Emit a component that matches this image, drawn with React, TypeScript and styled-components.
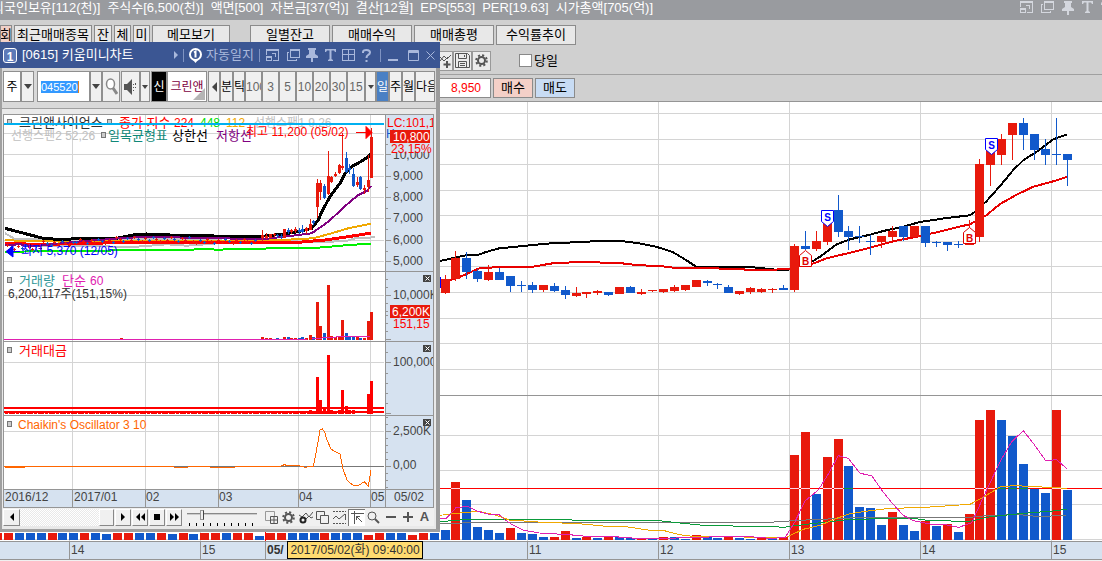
import React from 'react';
import styled, { createGlobalStyle } from 'styled-components';

const RED = '#e8190c';
const BLUE = '#1159cb';
const GRID = '#d4d4d4';
const LINE = '#959595';
const AXIS = '#d6e2f0';
const FONT = '"Liberation Sans", "Noto Sans CJK KR", sans-serif';

const Global = createGlobalStyle`
  *, *::before, *::after { box-sizing: border-box; }
  body { margin: 0; background: #f0f0f0; font: 13px/16px ${FONT}; color: #000; overflow: hidden; }
  button, input, select { font: inherit; color: inherit; margin: 0; }
  svg { display: block; flex: none; }
`;

/* ---------- main screen ---------- */

const Desktop = styled.div`
  position: relative;
  display: flex;
  flex-direction: column;
  min-height: 100vh;
  overflow: hidden;
`;

const InfoBar = styled.header`
  display: flex;
  align-items: center;
  justify-content: space-between;
  height: 20px;
  padding-bottom: 4px;
  background: #999b9f;
  color: #fff;
  white-space: pre;
  overflow: hidden;
`;

const Facts = styled.div`
  display: flex;
  gap: 7px;
  margin-left: -8px;
`;

const InfoIcons = styled.div`
  display: flex;
  gap: 8px;
  flex: none;
  width: 82px;
  overflow: hidden;
  color: #d4d7de;
`;

const ButtonRow = styled.nav`
  display: flex;
  gap: 2px;
  height: 25px;
  padding-top: 5px;
  background: #d0d0d0;
`;

const FlatButton = styled.button<{ $w: number; $bg?: string; $gap?: number }>`
  flex: none;
  display: flex;
  align-items: center;
  justify-content: center;
  width: ${p => p.$w}px;
  height: 20px;
  margin-left: ${p => p.$gap ?? 0}px;
  padding: 0;
  border: 1px solid #8b8b8b;
  background: ${p => p.$bg ?? '#e8e8e8'};
  white-space: nowrap;
  overflow: hidden;
`;

const ToolRow = styled.div`
  display: flex;
  align-items: center;
  height: 30px;
  padding: 2px 0 0 434px;
  background: #d0d0d0;
  border-bottom: 1px solid #a0a0a0;
`;

const SquareTool = styled.button`
  display: grid;
  place-items: center;
  width: 19px;
  height: 20px;
  padding: 0;
  border: 1px solid #999;
  background: #ececec;
  color: #555;
`;

const DayCheck = styled.label`
  display: flex;
  align-items: center;
  gap: 2px;
  margin-left: 28px;
  input {
    appearance: none;
    width: 13px;
    height: 13px;
    border: 1px solid #888;
    background: #fff;
  }
`;

const OrderRow = styled.div`
  display: flex;
  align-items: center;
  gap: 2px;
  height: 27px;
  padding: 0 0 0 400px;
  background: #d0d0d0;
  border-bottom: 1px solid ${LINE};
`;

const PriceInput = styled.input`
  width: 91px;
  height: 20px;
  padding: 0 9px;
  border: 1px solid #8b8b8b;
  background: #fff;
  color: #f00;
  font-size: 12px;
  text-align: right;
`;

const ChartArea = styled.section`
  display: flex;
  flex-direction: column;
  background: #fff;
  svg { width: 100%; }
`;

const TimeStrip = styled.div`
  position: relative;
  height: 19px;
  background: ${AXIS};
  border-top: 1px solid ${LINE};
  border-bottom: 1px solid ${LINE};
`;

const TimeTip = styled.output`
  position: absolute;
  left: 287px;
  top: -1px;
  width: 136px;
  height: 18px;
  border: 1px solid #000;
  background: #ffdb70;
  color: #333;
  font-size: 12px;
  text-align: center;
  white-space: nowrap;
`;

/* ---------- floating chart window ---------- */

const Window = styled.section`
  position: absolute;
  left: 0;
  top: 42px;
  width: 440px;
  display: flex;
  flex-direction: column;
  background: #e9e9e9;
  border-bottom: 3px solid #a0a0a0;
`;

const TitleBar = styled.header`
  display: flex;
  align-items: center;
  height: 26px;
  padding-left: 3px;
  background: #3b5693;
  color: #fff;
  white-space: nowrap;
`;

const Badge = styled.span`
  display: grid;
  place-items: center;
  width: 14px;
  height: 15px;
  margin-right: 5px;
  border: 1px solid #fff;
  border-radius: 3px;
  background: #5d7ab8;
  font-size: 12px;
  font-weight: 700;
`;

const Title = styled.h1`
  margin: 0;
  flex: 1;
  font-size: 13px;
  font-weight: 400;
`;

const TitleTools = styled.div`
  display: flex;
  align-items: center;
  flex: none;
  width: 266px;
  color: #a9b8dc;
`;

const Divider = styled.i`
  flex: none;
  width: 1px;
  height: 13px;
  margin-left: 5px;
  background: #7f93c2;
`;

const IconButton = styled.button<{ $w: number }>`
  display: grid;
  place-items: center;
  flex: none;
  width: ${p => p.$w}px;
  height: 20px;
  padding: 0;
  border: 0;
  background: none;
  color: inherit;
`;

const WindowBody = styled.div`
  display: flex;
  flex-direction: column;
  border-left: 2px solid #a0a0a0;
  border-right: 4px solid #9c9c9c;
  padding: 0 2px 3px 1px;
`;

const Periods = styled.div`
  display: flex;
  align-items: center;
  height: 41px;
  margin: 0 -2px 0 -1px;
  padding: 0 0 3px 0;
  background: #d9d9d9;
  border-bottom: 1px solid #a0a0a0;
  overflow: hidden;
`;

const Cell = styled.button<{ $w: number; $gap?: number; $bg?: string; $ink?: string }>`
  position: relative;
  flex: none;
  display: grid;
  place-items: center;
  width: ${p => p.$w}px;
  height: 31px;
  margin-left: ${p => p.$gap ?? 0}px;
  padding: 0;
  border: 1px solid #8f8f8f;
  background: ${p => p.$bg ?? '#f0f0f0'};
  color: ${p => p.$ink ?? '#000'};
  font-size: 12px;
  white-space: nowrap;
  overflow: hidden;
`;

const CellSelect = styled.select<{ $w: number; $gap?: number; $ink?: string; $bg?: string }>`
  appearance: none;
  flex: none;
  width: ${p => p.$w}px;
  height: 31px;
  margin-left: ${p => p.$gap ?? 0}px;
  padding: 0;
  border: 1px solid #8f8f8f;
  border-radius: 0;
  background: ${p => p.$bg ?? '#fff'};
  color: ${p => p.$ink ?? '#000'} !important;
  font-size: 12px;
  text-align: center;
`;

const CodeField = styled.div`
  display: flex;
  align-items: center;
  width: 53px;
  height: 31px;
  margin-left: 3px;
  padding-left: 3px;
  border: 1px solid #8f8f8f;
  background: #fff;
  input {
    width: 38px;
    height: 12px;
    padding: 0;
    border: 0;
    border-right: 1px solid #e08020;
    background: #3399ff;
    color: #fff;
    font-size: 11px;
    line-height: 12px;
  }
`;

const Corner = styled.i`
  position: absolute;
  right: 1px;
  bottom: 1px;
  border-left: 12px solid transparent;
  border-bottom: 12px solid #b5b5b5;
`;

const Panels = styled.div`
  margin: 5px 0 0 0;
  border: 1px solid ${LINE};
  background: #fff;
`;

const Panel = styled.div`
  position: relative;
  display: flex;
  border-bottom: 1px solid ${LINE};
  svg:first-child { flex: 1; min-width: 0; }
  svg:nth-child(2) { flex: none; background: ${AXIS}; border-left: 1px solid ${LINE}; }
`;

const PanelClose = styled.button`
  position: absolute;
  right: 2px;
  top: 3px;
  display: grid;
  place-items: center;
  width: 8px;
  height: 7px;
  padding: 0;
  border: 0;
  background: #444;
`;

const Dates = styled.div`
  height: 17px;
  background: ${AXIS};
  svg { width: 100%; }
`;

const Controls = styled.div`
  display: flex;
  align-items: center;
  height: 18px;
  background: #f0f0f0;
  color: #555;
`;

const ScrollButton = styled.button<{ $w?: number; $gap?: number }>`
  flex: none;
  display: grid;
  place-items: center;
  width: ${p => p.$w ?? 16}px;
  height: 17px;
  margin-left: ${p => p.$gap ?? 0}px;
  padding: 0;
  border: 1px solid;
  border-color: #fff #888 #888 #fff;
  background: #f0f0f0;
`;

const ScrollTrack = styled.div`
  flex: none;
  width: 79px;
  height: 17px;
  background: repeating-conic-gradient(#fff 0 25%, #e9e9e9 0 50%) 0 0 / 2px 2px;
`;

const Zoom = styled.input`
  appearance: none;
  flex: none;
  width: 70px;
  height: 17px;
  margin: 0 6px 0 5px !important;
  background:
    linear-gradient(#888, #888) 0 4px / 100% 1px no-repeat,
    linear-gradient(#ccc, #ccc) 0 5px / 100% 1px no-repeat,
    repeating-linear-gradient(90deg, transparent 0 2px, #000 2px 3px, transparent 3px 7px) 0 14px / 100% 3px no-repeat;
  &::-webkit-slider-thumb {
    appearance: none;
    width: 4px;
    height: 10px;
    margin-top: -5px;
    border: 1px solid #999;
    border-right-color: #444;
    background: #f0f0f0;
  }
`;

const Tool = styled.button<{ $on?: boolean }>`
  display: grid;
  place-items: center;
  flex: none;
  width: 17px;
  height: 17px;
  padding: 0;
  border: 0;
  border-left: ${p => (p.$on ? '1px solid #777' : '0')};
  border-top: ${p => (p.$on ? '1px solid #777' : '0')};
  background: ${p => (p.$on ? '#fff' : 'none')};
  color: #555;
`;

/* ---------- icons ---------- */

const ResizeIcon = () => (
  <svg width="13" height="12" fill="currentColor" shapeRendering="crispEdges">
    <path d="M0 0h13v12H7v-1h5V2H1v4H0z" />
    <path d="M0 7h6v5H0zM1 9v2h4V9z" fillRule="evenodd" />
    <path d="M6 4h4v4H9V5H6z" />
  </svg>
);
const CopyIcon = () => (
  <svg width="13" height="12" fill="currentColor" shapeRendering="crispEdges">
    <path d="M3 0h10v9H3zM4 2v6h8V2z" fillRule="evenodd" />
    <path d="M0 3h2v1H1v7h8v-1h1v2H0z" />
  </svg>
);
const PinIcon = () => (
  <svg width="12" height="14" fill="currentColor">
    <path d="M2 0h8v2H9v4l3 2v2H7v4H5v-4H0V8l3-2V2H2z" />
  </svg>
);
const TeeIcon = () => (
  <svg width="11" height="12" fill="currentColor">
    <path d="M0 0h11v3h-1L9 1.500H6.500V10l1.500 1v1H3v-1l1.500-1V1.500H2L1 3H0z" />
  </svg>
);
const GridIcon = () => (
  <svg width="13" height="12" fill="currentColor" shapeRendering="crispEdges">
    <path d="M0 0h13v12H0zM1 1v4h5V1zM7 1v4h5V1zM1 6v5h5V6zM7 6v5h5V6z" fillRule="evenodd" />
  </svg>
);
const HelpIcon = () => (
  <svg width="9" height="13" fill="none" stroke="currentColor" strokeWidth="2">
    <path d="M1 4V3q0-2 3.500-2T8 3.500Q8 5 6 6 4.500 7 4.500 9M4.500 11v2" />
  </svg>
);
const MinIcon = () => <svg width="11" height="12"><path d="M0 10h10v2H0z" fill="currentColor" /></svg>;
const MaxIcon = () => (
  <svg width="11" height="11" fill="none" stroke="currentColor"><path d="M.5.5h10v10H.5zM0 1.500h11M0 2.500h11" /></svg>
);
const CloseIcon = () => (
  <svg width="9" height="9" stroke="currentColor"><path d="M.5.5l8 8M8.500.5l-8 8" /></svg>
);
const ClockIcon = () => (
  <svg width="15" height="15">
    <path d="M7.500 15L5 12h5z" fill="#fff" />
    <circle cx="7.500" cy="6.500" r="5.500" fill="#3b5693" stroke="#fff" strokeWidth="2" />
    <path d="M6 4.500l1.500-1V9.500" fill="none" stroke="#fff" strokeWidth="2" />
  </svg>
);
const Triangle = ({ dir, size = 4, color = '#444' }: { dir: 'left' | 'right' | 'down'; size?: number; color?: string }) => {
  const s = size;
  const shape = {
    left: `M${s} 0v${2 * s}L0 ${s}z`,
    right: `M0 0v${2 * s}L${s} ${s}z`,
    down: `M0 0h${2 * s}L${s} ${s + 1}z`,
  }[dir];
  return (
    <svg width={dir === 'down' ? 2 * s : s} height={dir === 'down' ? s + 1 : 2 * s}>
      <path d={shape} fill={color} />
    </svg>
  );
};
const LensIcon = () => (
  <svg width="13" height="18" fill="none" stroke="#888">
    <ellipse cx="5.500" cy="6" rx="4" ry="5" fill="#fff" strokeWidth="1.500" />
    <path d="M8 10l4 6" strokeWidth="3" />
  </svg>
);
const SpeakerIcon = () => (
  <svg width="14" height="16" fill="#555">
    <path d="M0 5h3l5-5v16l-5-5H0z" />
    <path d="M9 5h1v1H9zM9 8h1v1H9zM9 11h1v1H9zM11 4h1v2h-1zM11 8h1v1h-1z" />
  </svg>
);
const GearIcon = ({ size = 13 }: { size?: number }) => (
  <svg width={size} height={size} viewBox="0 0 13 13" fill="none" stroke="currentColor">
    <circle cx="6.500" cy="6.500" r="3.500" strokeWidth="2" />
    <circle cx="6.500" cy="6.500" r="5.300" strokeWidth="2" strokeDasharray="2.080 2.080" />
  </svg>
);
const SaveIcon = () => (
  <svg width="15" height="15" fill="none" stroke="currentColor">
    <path d="M.5.5h12l2 2v12H.5zM3.500.5v5h8v-5M3.500 14V8.500h8V14M5 10.500h5M5 12.500h5M9.500 2v2" />
  </svg>
);
const AddChartIcon = () => (
  <svg width="15" height="15" fill="none" stroke="currentColor">
    <path d="M0 4l4 4 4-5 3 3 4-4M0 9l4-5 4 4 4-4" />
    <path d="M11 8v7M7.500 11.500h7" strokeWidth="2" />
  </svg>
);

/* ---------- chart data ---------- */

type Candle = [string, number, number, number, number];

// direction, body top, body bottom, high, low
const candles: Candle[] = [
  ['r', 279, 293, 275, 294], ['r', 258, 279, 251, 281], ['b', 258, 272, 252, 279], ['b', 271, 279, 269, 282],
  ['r', 272, 280, 265, 281], ['b', 272, 280, 268, 280], ['b', 276, 286, 276, 292], ['b', 285, 286, 281, 292],
  ['b', 285, 290, 282, 293], ['r', 285, 290, 285, 292], ['b', 286, 291, 283, 292], ['b', 290, 295, 286, 299],
  ['r', 293, 296, 287, 297], ['r', 292, 294, 292, 298], ['r', 291, 293, 290, 295], ['b', 292, 295, 292, 296],
  ['r', 287, 294, 287, 294], ['b', 287, 293, 286, 293], ['r', 292, 294, 289, 295], ['r', 290, 291, 290, 292],
  ['r', 289, 292, 289, 293], ['r', 287, 291, 285, 292], ['r', 285, 290, 285, 291], ['r', 280, 287, 280, 287],
  ['b', 281, 283, 280, 286], ['b', 284, 285, 283, 289], ['b', 287, 293, 285, 293], ['r', 291, 294, 291, 295],
  ['r', 288, 292, 287, 294], ['r', 289, 292, 288, 293], ['r', 289, 290, 288, 293], ['b', 288, 290, 285, 290],
  ['r', 246, 290, 244, 292], ['b', 246, 249, 231, 250], ['r', 241, 249, 231, 251], ['r', 223, 242, 223, 245],
  ['b', 210, 232, 195, 237], ['b', 231, 237, 226, 250], ['b', 236, 237, 226, 243], ['b', 241, 242, 235, 255],
  ['r', 236, 242, 236, 248], ['r', 231, 237, 226, 241], ['b', 226, 237, 226, 241], ['r', 226, 237, 226, 237],
  ['b', 226, 243, 226, 247], ['b', 242, 243, 241, 247], ['b', 242, 245, 242, 251], ['b', 244, 245, 241, 248],
  ['r', 235, 245, 220, 245], ['r', 164, 237, 159, 242], ['r', 150, 165, 150, 186], ['r', 139, 155, 134, 165],
  ['r', 123, 135, 123, 160], ['b', 123, 135, 118, 150], ['b', 134, 150, 134, 160], ['b', 149, 155, 139, 165],
  ['b', 154, 155, 118, 165], ['b', 154, 160, 154, 186],
];

const volumes: [string, number][] = [
  ['b', 530], ['r', 482], ['b', 500], ['b', 527], ['b', 530], ['b', 533], ['r', 528], ['b', 533], ['b', 534], ['b', 537],
  ['r', 537], ['r', 531], ['b', 538], ['r', 537], ['b', 538], ['r', 537], ['b', 537], ['b', 538], ['r', 538], ['b', 539],
  ['r', 537], ['b', 537], ['b', 539], ['r', 535], ['b', 537], ['b', 538], ['r', 537], ['b', 538], ['b', 539], ['r', 538],
  ['b', 538], ['r', 537], ['r', 455], ['r', 432], ['b', 494], ['r', 457], ['r', 439], ['b', 466], ['b', 507], ['b', 508],
  ['b', 525], ['r', 512], ['b', 525], ['b', 531], ['r', 521], ['b', 526], ['r', 524], ['b', 532], ['r', 514], ['r', 420],
  ['r', 410], ['b', 420], ['b', 436], ['b', 464], ['b', 489], ['b', 493], ['r', 410], ['b', 490],
];

const earlier = 'rrbbbrbbrbbrrbbrbrbrrbrrbrrbbbrbbbrrbbrrb';
const shortEarlier: Record<number, number> = { 10: 534, 16: 534, 18: 534, 24: 536, 34: 535, 38: 535 };

const barX = (i: number) => Math.floor(441 + (i * 131) / 12);
const ink = (k: string) => (k === 'r' ? RED : BLUE);

// Series are stored at three units per pixel, relative to an origin.
const trace = (s: string, ox: number, oy: number) =>
  s.trim().split(/\s+/).map(p => {
    const [x, y] = p.split(',').map(Number);
    return `${(ox + x / 3).toFixed(1)},${(oy + y / 3).toFixed(1)}`;
  }).join(' ');

const Curve = ({ pts, color, w = 1 }: { pts: string; color: string; w?: number }) => (
  <polyline points={pts} fill="none" stroke={color} strokeWidth={w} shapeRendering="crispEdges" />
);

const priceSlow = trace('12,243 40,237 60,232 95,225 125,225 150,216 190,205 240,200 290,195 355,189 420,187 490,183 555,183 610,190 660,200 710,216 750,240 780,260 860,261 940,261 980,265 1020,269', 436, 180)
  + ' ' + trace('55,509 90,499 128,484 150,470 200,433 240,418 300,404 340,393 400,380 450,366 530,354 600,346 618,333 650,303 690,258 730,210 760,181 800,155 850,118 892,103', 770, 100);
const priceFast = trace('15,309 45,300 80,287 130,265 190,261 290,260 350,250 430,246 550,249 600,255 680,259 720,264 810,264 940,269 1010,269', 436, 180)
  + ' ' + trace('60,507 90,499 128,491 170,475 240,458 300,443 370,424 440,410 500,397 560,382 600,373 650,345 690,312 740,284 790,260 850,244 892,230', 770, 100);

const volMagenta = trace('12,386 30,386 60,353 95,349 125,364 165,374 190,374 205,388 230,405 260,420 310,429 400,434 440,438 535,440 600,445 700,445 770,442 930,439', 436, 390)
  + ' ' + trace('0,445 45,443 75,395 105,333 145,300 175,252 205,197 235,205 270,250 305,257 335,300 365,338 400,376 430,392 480,402 530,405 567,412 605,398 650,300 690,215 725,155 760,122 790,160 827,212 860,209 890,236', 770, 390);
const volOrange = trace('12,376 80,368 130,364 180,376 220,390 305,396 430,401 500,408 570,410 635,420 685,422 730,434 770,439 890,440', 436, 390)
  + ' ' + trace('0,443 50,441 100,418 150,406 200,385 240,371 300,362 350,356 480,351 600,343 640,322 690,291 730,287 780,289 830,292 890,295', 770, 390);
const volGreen = trace('12,395 45,392 100,388 400,388 410,391 660,391 740,400 800,406 930,409', 436, 390)
  + ' ' + trace('0,409 40,412 100,404 180,395 240,388 430,385 480,392 600,394 660,380 740,372 800,367 860,362 890,357', 770, 390);
const volGray = trace('12,401 75,401 80,397 1000,397', 436, 390)
  + ' ' + trace('0,397 90,391 240,384 600,382 660,376 750,374 810,380 890,375', 770, 390);

const hours = [69, 200, 527, 658, 789, 920, 1051];

const Marker = ({ x, y, kind }: { x: number; y: number; kind: 'S' | 'B' }) => {
  const c = kind === 'S' ? '#00f' : '#e00000';
  const d = kind === 'S' ? 'M-6 0h12v11l-6 5l-6-5z' : 'M-6 16h12V5L0 0l-6 5z';
  return (
    <g transform={`translate(${x + 0.5} ${y + 0.5})`}>
      <path d={d} fill="#fff" stroke={c} />
      <text x="0" y={kind === 'S' ? 10 : 14} fontSize="10" fontWeight="700" textAnchor="middle" fill={c}>{kind}</text>
    </g>
  );
};

const PriceChart = () => (
  <svg height="293">
    <g transform="translate(0 -102)">
      <g stroke={GRID} shapeRendering="crispEdges">
        {[113, 139, 164, 190, 215, 241, 266, 292, 318, 343, 369].map(y => <line key={y} x1="0" x2="100%" y1={y + 0.5} y2={y + 0.5} />)}
        {hours.map(x => <line key={x} x1={x + 0.5} x2={x + 0.5} y1="102" y2="396" />)}
      </g>
      <Curve pts={priceSlow} color="#000" w={2} />
      <Curve pts={priceFast} color="#e80000" w={2} />
      <g shapeRendering="crispEdges">
        {candles.map(([k, top, bottom, high, low], i) => (
          <g key={i} fill={ink(k)}>
            <rect x={barX(i) + 4} y={high} width="1" height={low - high} />
            <rect x={barX(i)} y={top} width="9" height={bottom - top} />
          </g>
        ))}
        <rect x="440" y="277" width="1" height="11" fill="#00f" />
      </g>
      <Marker kind="B" x={805} y={250} />
      <Marker kind="S" x={827} y={210} />
      <Marker kind="B" x={969} y={227} />
      <Marker kind="S" x={991} y={138} />
    </g>
  </svg>
);

const VolumeChart = () => (
  <svg height="146">
    <g transform="translate(0 -395)">
      <g stroke={GRID} shapeRendering="crispEdges">
        {[435, 470, 504, 539].map(y => <line key={y} x1="0" x2="100%" y1={y + 0.5} y2={y + 0.5} />)}
        {hours.map(x => <line key={x} x1={x + 0.5} x2={x + 0.5} y1="395" y2="541" />)}
        <line x1="0" x2="100%" y1="395.5" y2="395.5" stroke={LINE} />
        <line x1="0" x2="100%" y1="488.5" y2="488.5" stroke="#f00" />
        <line x1="265.5" x2="265.5" y1="530" y2="541" stroke="#f00" />
      </g>
      <g shapeRendering="crispEdges">
        {earlier.split('').map((k, i) => {
          const top = shortEarlier[i] ?? 533;
          return <rect key={i} x={barX(i - 41)} y={top} width="9" height={540 - top} fill={ink(k)} />;
        })}
        {volumes.map(([k, top], i) => (
          <g key={i}>
            <rect x={barX(i)} y={top} width="9" height={540 - top} fill={ink(k)} />
            {top < 488 && <rect x={barX(i)} y="488" width="9" height="1" fill={k === 'r' ? '#ffd8e8' : '#0a9a3a'} />}
          </g>
        ))}
      </g>
      <Curve pts={volGray} color="#777" />
      <Curve pts={volGreen} color="#0a9a3a" />
      <Curve pts={volOrange} color="#f0a800" />
      <Curve pts={volMagenta} color="#e020b0" />
    </g>
  </svg>
);

/* ---------- mini chart ---------- */

const monthLines = [72, 145, 218, 298, 370];

const Grid = ({ ys, top, bottom }: { ys: number[]; top: number; bottom: number }) => (
  <g stroke={GRID} shapeRendering="crispEdges">
    {ys.map(y => <line key={y} x1="4" x2="384" y1={y + 0.5} y2={y + 0.5} />)}
    {monthLines.map(x => <line key={x} x1={x + 0.5} x2={x + 0.5} y1={top} y2={bottom} />)}
  </g>
);

const Ticks = ({ major, minor }: { major: number[]; minor: number[] }) => (
  <g fill={LINE}>
    {major.map(y => <rect key={y} x="386" y={y} width="5" height="1" />)}
    {minor.map(y => <rect key={y} x="386" y={y} width="2" height="1" />)}
  </g>
);

const Bullet = ({ x, y }: { x: number; y: number }) => (
  <rect x={x + 0.5} y={y + 0.5} width="4" height="5" fill="#ccc" stroke="#777" shapeRendering="crispEdges" />
);

const T = ({ x, y, c, s = 12, children }: { x: number; y: number; c: string; s?: number; children: React.ReactNode }) => (
  <text x={x} y={y} fill={c} fontSize={s}>{children}</text>
);

// left, direction, body top, body bottom, high, low at three units per pixel
const miniCandles: [number, string, number, number, number, number][] = [
  [138, 'r', 391, 400, 374, 410], [150, 'r', 393, 398, 385, 402], [162, 'r', 388, 398, 388, 400], [174, 'r', 387, 391, 383, 395],
  [183, 'b', 390, 394, 386, 400], [195, 'b', 392, 397, 388, 402], [204, 'r', 373, 398, 371, 400], [216, 'b', 375, 382, 370, 388],
  [225, 'r', 376, 380, 371, 386], [237, 'r', 372, 379, 366, 384], [250, 'b', 376, 381, 370, 386], [258, 'b', 372, 380, 360, 384],
  [270, 'r', 370, 377, 366, 388], [282, 'r', 356, 374, 342, 376], [291, 'b', 349, 354, 345, 360],
  [304, 'r', 235, 305, 222, 340], [313, 'r', 235, 262, 225, 285], [325, 'b', 243, 279, 237, 282], [337, 'r', 213, 268, 138, 270],
  [346, 'r', 216, 232, 214, 235], [358, 'r', 207, 214, 200, 216], [370, 'r', 180, 205, 177, 207], [379, 'r', 183, 188, 85, 195],
  [391, 'b', 160, 200, 142, 205], [399, 'b', 190, 195, 178, 208], [412, 'b', 207, 242, 190, 245], [424, 'r', 231, 240, 215, 245],
  [433, 'b', 216, 252, 212, 256], [445, 'r', 250, 254, 240, 268], [457, 'r', 225, 247, 150, 260], [466, 'r', 96, 218, 70, 218],
];

const flat = Array.from({ length: 69 }, (_, i) => {
  const x = 6 + i * 3.64;
  const drift = x < 40 ? 247 : x < 75 ? 243 : x < 115 ? 241 : x < 190 ? 239 : 241;
  return { x: Math.round(x), y: drift + ((i * 7) % 5) - 2, k: (i * 5) % 7 < 4 ? 'r' : 'b' };
});

const miniVolumes: [number, string, number][] = [
  [138, 'r', 201], [150, 'r', 204], [162, 'r', 204], [183, 'b', 204], [204, 'r', 201], [216, 'b', 201], [225, 'r', 204], [237, 'r', 204],
  [250, 'b', 204], [258, 'b', 201], [270, 'r', 204], [282, 'r', 195], [291, 'b', 201], [303, 'r', 96], [312, 'r', 168], [324, 'b', 189],
  [336, 'r', 45], [345, 'r', 198], [357, 'r', 201], [369, 'r', 198], [378, 'r', 150], [390, 'b', 189], [399, 'b', 198], [411, 'b', 198],
  [423, 'r', 198], [432, 'b', 204], [444, 'r', 204], [456, 'r', 153], [465, 'r', 126],
];
const miniAmounts: [number, number][] = [
  [282, 420], [303, 321], [312, 390], [324, 415], [336, 255], [345, 420], [357, 424], [369, 420], [378, 360], [390, 408],
  [399, 420], [411, 420], [456, 372], [465, 333],
];

const px = (v: number) => Math.round(v / 3);
const L = (s: string) => trace(s, 0, 105);
const R = (s: string) => trace(s, 215, 105);

const miniMAs = [
  { c: '#c0c0c0', w: 2, p: L('15,385 45,402 350,402 660,403') + ' ' + R('20,407 250,407') },
  { c: '#c0c0c0', w: 2, p: L('70,422 100,424 300,424 400,426 500,418 560,422 640,416') + ' ' + R('0,415 300,412 395,408 420,400 480,397') },
  { c: '#00f000', w: 2, p: L('15,440 230,438 440,435 640,433') + ' ' + R('0,434 180,430 300,429 400,420 468,416') },
  { c: '#f0a800', w: 2, p: L('15,406 200,410 350,408 640,408') + ' ' + R('0,408 200,405 295,400 350,385 400,370 468,356') },
  { c: '#f00', w: 3, p: L('15,416 140,418 400,412 640,414') + ' ' + R('0,412 250,412 330,405 400,395 468,384') },
  { c: '#000', w: 3, p: L('15,370 60,382 130,400 170,403 355,399 400,390 440,387 510,390 640,393') + ' ' + R('0,395 150,393 200,388 250,380 290,370 310,345 320,320 345,275 375,235 390,205 410,185 440,168 460,155 468,145') },
  { c: '#800080', w: 2, p: L('15,420 60,418 100,424 230,410 360,400 440,395 640,400') + ' ' + R('0,400 150,402 250,390 290,385 340,350 400,295 430,270 455,258 468,243') },
];

const oscillator = trace('0,156 60,156 75,155 195,154 208,149 220,152 250,152 270,157 295,154 303,115 315,45 322,42 328,48 336,75 348,102 360,110 375,116 385,165 397,197 415,211 430,212 448,200 460,214 468,165', 215, 415);

const CloseMark = () => (
  <PanelClose aria-label="close panel">
    <svg width="5" height="5" stroke="#fff"><path d="M.5.5l4 4M4.500.5l-4 4" /></svg>
  </PanelClose>
);

const MiniPrice = () => (
  <Panel>
    <svg height="156">
      <g transform="translate(-4 -115)">
        <Grid ys={[133, 154, 176, 197, 218, 240, 261]} top={115} bottom={271} />
        <Bullet x={7} y={119} />
        <T x={19} y={127} c="#333" s={13}>크린앤사이언스</T>
        <Bullet x={107} y={119} />
        <T x={119} y={127} c="#f00" s={13}>종가 지수</T>
        <T x={174} y={127} c="#f00">224</T>
        <T x={200} y={127} c="#00e000">448</T>
        <T x={226} y={127} c="#f0a800">112</T>
        <T x={254} y={127} c="#c0c0c0">선행스팬1 9,26</T>
        <T x={11} y={140} c="#c0c0c0">선행스팬2 52,26</T>
        <Bullet x={101} y={132} />
        <T x={108} y={140} c="#108878" s={13}>일목균형표</T>
        <T x={172} y={140} c="#000" s={13}>상한선</T>
        <T x={216} y={140} c="#800080" s={13}>저항선</T>
        <rect x="4" y="123" width="380" height="2" fill="#00b0f0" />
        {miniMAs.map((m, i) => <Curve key={i} pts={m.p} color={m.c} w={m.w} />)}
        <g shapeRendering="crispEdges">
          {flat.map((f, i) => (
            <g key={i} fill={ink(f.k)}>
              <rect x={f.x} y={f.y} width="3" height="1" />
              <rect x={f.x + 1} y={f.y - 1} width="1" height="3" />
            </g>
          ))}
          {miniCandles.map(([x, k, top, bottom, high, low]) => (
            <g key={x} fill={ink(k)}>
              <rect x={215 + px(x) + 1} y={105 + px(high)} width="1" height={px(low) - px(high)} />
              <rect x={215 + px(x)} y={105 + px(top)} width="3" height={Math.max(1, px(bottom) - px(top))} />
            </g>
          ))}
        </g>
        <T x={246} y={136} c="#f00">최고 11,200 (05/02)</T>
        <path d="M356 132.500h10M366 126.500v12l6-6z" fill="#f00" stroke="#f00" strokeWidth="1" />
        <T x={21} y={255} c="#00f">최저 5,370 (12/05)</T>
        <path d="M20 251.500h-8M13 246v11l-7-5.500z" fill="#00f" stroke="#00f" />
      </g>
    </svg>
    <svg width="48" height="156">
      <g transform="translate(-386 -115)">
        <Ticks major={[154, 176, 197, 218, 240, 261]} minor={[144, 165, 187, 208, 229, 251]} />
        <T x={387} y={127} c="#f00">LC:101,1</T>
        <T x={386} y={138} c={BLUE}>H</T>
        <T x={393} y={159} c="#444">10,000</T>
        <T x={393} y={180} c="#444">9,000</T>
        <T x={393} y={201} c="#444">8,000</T>
        <T x={393} y={222} c="#444">7,000</T>
        <T x={393} y={244} c="#444">6,000</T>
        <T x={393} y={265} c="#444">5,000</T>
        <rect x="392" y="142" width="38" height="10" fill={AXIS} />
        <T x={391} y={153} c="#f00">23,15%</T>
        <rect x="390" y="130" width="40" height="13" fill={RED} />
        <T x={393} y={141} c="#fff">10,800</T>
      </g>
    </svg>
  </Panel>
);

const MiniVolume = () => (
  <Panel>
    <svg height="69">
      <g transform="translate(-4 -272)">
        <Grid ys={[295]} top={272} bottom={341} />
        <Bullet x={7} y={277} />
        <T x={19} y={285} c="#309898" s={13}>거래량</T>
        <T x={62} y={285} c="#e020b0" s={13}>단순</T>
        <T x={90} y={285} c="#e020b0">60</T>
        <T x={8} y={298} c="#333">6,200,117주(151,15%)</T>
        <g shapeRendering="crispEdges">
          {miniVolumes.map(([x, k, top]) => (
            <rect key={x} x={215 + px(x)} y={270 + px(top)} width="3" height={70 - px(top)} fill={ink(k)} />
          ))}
          <rect x="120" y="338" width="3" height="1" fill={RED} />
        </g>
        <Curve pts={'4,339.500 ' + trace('0,208 290,207 330,203 380,200 468,198', 215, 270)} color="#e020b0" />
      </g>
    </svg>
    <svg width="48" height="69">
      <g transform="translate(-386 -272)">
        <Ticks major={[295, 339]} minor={[279, 287, 303, 311, 315, 323, 331]} />
        <T x={393} y={299} c="#444">10,000K</T>
        <rect x="390" y="305" width="40" height="13" fill={RED} />
        <T x={392} y={316} c="#fff">6,200K</T>
        <T x={393} y={328} c="#f00">151,15</T>
      </g>
    </svg>
    <CloseMark />
  </Panel>
);

const MiniAmount = () => (
  <Panel>
    <svg height="73">
      <g transform="translate(-4 -342)">
        <Grid ys={[362]} top={342} bottom={415} />
        <Bullet x={7} y={347} />
        <T x={19} y={355} c="#f00" s={13}>거래대금</T>
        <g fill="#f00" shapeRendering="crispEdges">
          <rect x="4" y="407" width="380" height="2" />
          <rect x="4" y="411" width="380" height="2" />
          {Array.from({ length: 91 }, (_, i) => <rect key={i} x={Math.round(5 + i * 3.64)} y="413" width="3" height="1" />)}
          {miniAmounts.map(([x, top]) => (
            <rect key={x} x={215 + px(x)} y={270 + px(top)} width="3" height={144 - px(top)} />
          ))}
        </g>
      </g>
    </svg>
    <svg width="48" height="73">
      <g transform="translate(-386 -342)">
        <Ticks major={[362, 413]} minor={[352, 373, 383, 393, 403]} />
        <T x={393} y={366} c="#444">100,000</T>
      </g>
    </svg>
    <CloseMark />
  </Panel>
);

const MiniOscillator = () => (
  <Panel>
    <svg height="73">
      <g transform="translate(-4 -416)">
        <Grid ys={[431]} top={416} bottom={489} />
        <Bullet x={7} y={421} />
        <T x={18} y={429} c="#ff6600">Chaikin's Oscillator 3 10</T>
        <rect x="4" y="466" width="380" height="1" fill="#777" />
        <path d="M4 466.500h170M188 466.500h22" stroke="#ff6600" shapeRendering="crispEdges" />
        <path d="M5 467.500h20M174 467.500h14M210 467.500h10" stroke="#ff6600" shapeRendering="crispEdges" />
        <Curve pts={oscillator} color="#ff6600" />
      </g>
    </svg>
    <svg width="48" height="73">
      <g transform="translate(-386 -416)">
        <Ticks major={[431, 466]} minor={[417, 424, 438, 445, 452, 459, 473, 480, 487]} />
        <T x={393} y={435} c="#444">2,500K</T>
        <T x={393} y={469} c="#444">0,00</T>
      </g>
    </svg>
    <CloseMark />
  </Panel>
);

const Months = () => (
  <Dates>
    <svg height="17">
      <g transform="translate(-4 0)">
        <g fill={LINE}>
          {[...monthLines, 385].map(x => <rect key={x} x={x} y="0" width="1" height="17" />)}
        </g>
        {([[5, '2016/12'], [74, '2017/01'], [146, '02'], [219, '03'], [299, '04'], [371, '05'], [394, '05/02']] as [number, string][]).map(([x, s]) => (
          <T key={x} x={x} y={11} c="#444">{s}</T>
        ))}
      </g>
    </svg>
  </Dates>
);

const MiniWindow = () => (
  <Window>
    <TitleBar>
      <Badge>1</Badge>
      <Title>[0615] 키움미니차트</Title>
      <TitleTools>
        <Triangle dir="right" color="#a9b8dc" />
        <Divider />
        <IconButton $w={22} aria-label="clock"><ClockIcon /></IconButton>
        <span>자동일지</span>
        <Divider />
        <IconButton $w={26} aria-label="resize"><ResizeIcon /></IconButton>
        <IconButton $w={16} aria-label="copy"><CopyIcon /></IconButton>
        <IconButton $w={20} aria-label="pin"><PinIcon /></IconButton>
        <IconButton $w={17} aria-label="text"><TeeIcon /></IconButton>
        <IconButton $w={20} aria-label="layout"><GridIcon /></IconButton>
        <IconButton $w={16} aria-label="help"><HelpIcon /></IconButton>
        <Divider />
        <IconButton $w={25} aria-label="minimize"><MinIcon /></IconButton>
        <IconButton $w={15} aria-label="maximize"><MaxIcon /></IconButton>
        <IconButton $w={20} aria-label="close"><CloseIcon /></IconButton>
      </TitleTools>
    </TitleBar>
    <WindowBody>
      <Periods>
        <CellSelect $w={18} $gap={1} aria-label="market"><option>주</option></CellSelect>
        <Cell $w={13} aria-label="open market"><Triangle dir="down" /></Cell>
        <CodeField><input aria-label="code" defaultValue="045520" /></CodeField>
        <Cell $w={12} aria-label="recent codes"><Triangle dir="down" /></Cell>
        <Cell $w={18} aria-label="search"><LensIcon /></Cell>
        <Cell $w={19} $gap={1} aria-label="sound"><SpeakerIcon /></Cell>
        <Cell $w={10} aria-label="sound options"><Triangle dir="down" size={3} /></Cell>
        <Cell $w={16} $gap={1} $bg="#000" $ink="#fff">신</Cell>
        <Cell $w={40} $bg="#fff" $ink="#800040">크린앤<Corner /></Cell>
        <Cell $w={12} $gap={1} aria-label="previous"><Triangle dir="left" size={5} /></Cell>
        <Cell $w={13}>분</Cell>
        <Cell $w={12}>틱</Cell>
        {['100', '3', '5', '10', '20', '30'].map(n => <Cell key={n} $w={17} $ink="#666">{n}</Cell>)}
        <CellSelect $w={18} $ink="#666" $bg="#f0f0f0" aria-label="minutes"><option>15</option></CellSelect>
        <Cell $w={11} aria-label="open minutes"><Triangle dir="down" size={3} /></Cell>
        <Cell $w={13} $bg="#4a80c4" $ink="#fff">일</Cell>
        <Cell $w={13}>주</Cell>
        <Cell $w={13}>월</Cell>
        <Cell $w={20}>다음</Cell>
      </Periods>
      <Panels>
        <MiniPrice />
        <MiniVolume />
        <MiniAmount />
        <MiniOscillator />
        <Months />
      </Panels>
      <Controls>
        <ScrollButton $w={17} aria-label="scroll left"><Triangle dir="left" color="#000" /></ScrollButton>
        <ScrollTrack />
        <ScrollButton $w={15} aria-label="scroll thumb" />
        <ScrollButton aria-label="scroll right" $gap={1}><Triangle dir="right" color="#000" /></ScrollButton>
        <ScrollButton aria-label="rewind" $gap={1}>
          <svg width="9" height="8"><path d="M4 0v8L0 4zM9 0v8L5 4z" /></svg>
        </ScrollButton>
        <ScrollButton aria-label="stop" $gap={1}><svg width="6" height="6"><path d="M0 0h6v6H0z" /></svg></ScrollButton>
        <ScrollButton aria-label="forward" $gap={1}>
          <svg width="9" height="8"><path d="M0 0v8l4-4zM5 0v8l4-4z" /></svg>
        </ScrollButton>
        <Zoom type="range" defaultValue={19} aria-label="bars shown" />
        <Tool aria-label="add panel">
          <svg width="13" height="13" fill="none" stroke="currentColor"><path d="M6 9.500H.5v-9h9V6" stroke="#999" /><path d="M5.500 5.500h7v7h-7zM9 5v8M5 9h8" /></svg>
        </Tool>
        <Tool aria-label="settings"><GearIcon /></Tool>
        <Tool aria-label="indicator">
          <svg width="14" height="13" fill="none" stroke="currentColor"><path d="M0 4l3 2 4-4 3 4 4-5M7 8l3-3 2 2 2-1" /><circle cx="4" cy="9" r="2.500" strokeWidth="2" stroke="#222" /></svg>
        </Tool>
        <Tool aria-label="windows">
          <svg width="13" height="13" fill="none" stroke="currentColor"><path d="M4 8.500H.5v-8h8V4" /><path d="M4.500 4.500h8v8h-8z" /></svg>
        </Tool>
        <Tool aria-label="range">
          <svg width="13" height="13" fill="none" stroke="currentColor"><path d="M0 .5h13M0 12.500h13" strokeDasharray="2 1" /><path d="M0 8l3-3 3 3 6-5M12.500 3v6" /></svg>
        </Tool>
        <Tool aria-label="crosshair" $on>
          <svg width="13" height="13" fill="none" stroke="currentColor"><path d="M0 2.500h13M3.500 0v13M5 5l6 6M5.500 9V5.500H9" /></svg>
        </Tool>
        <Tool aria-label="magnify">
          <svg width="13" height="13" fill="none" stroke="currentColor"><circle cx="5" cy="5" r="4" /><path d="M8 8l4 4" strokeWidth="2" /></svg>
        </Tool>
        <Tool aria-label="zoom out"><svg width="10" height="2"><path d="M0 0h10v2H0z" fill="currentColor" /></svg></Tool>
        <Tool aria-label="zoom in"><svg width="10" height="10"><path d="M0 4h10v2H0zM4 0h2v10H4z" fill="currentColor" /></svg></Tool>
        <Tool aria-label="automatic"><b>A</b></Tool>
      </Controls>
    </WindowBody>
  </Window>
);

const facts = [
  '외국인보유[112(천)]', '주식수[6,500(천)]', '액면[500]', '자본금[37(억)]',
  '결산[12월]', 'EPS[553]', 'PER[19.63]', '시가총액[705(억)]',
];

const App = () => (
  <>
    <Global />
    <Desktop>
      <InfoBar>
        <Facts>{facts.map(f => <span key={f}>{f}</span>)}</Facts>
        <InfoIcons><ResizeIcon /><CopyIcon /><PinIcon /><TeeIcon /><HelpIcon /></InfoIcons>
      </InfoBar>
      <ButtonRow>
        <FlatButton $w={12} $bg="#f0d0c8">회</FlatButton>
        <FlatButton $w={78}>최근매매종목</FlatButton>
        <FlatButton $w={18}>잔</FlatButton>
        <FlatButton $w={17}>체</FlatButton>
        <FlatButton $w={17}>미</FlatButton>
        <FlatButton $w={78}>메모보기</FlatButton>
        <FlatButton $w={80} $gap={18}>일별잔고</FlatButton>
        <FlatButton $w={80}>매매수익</FlatButton>
        <FlatButton $w={80}>매매총평</FlatButton>
        <FlatButton $w={80}>수익률추이</FlatButton>
      </ButtonRow>
      <ToolRow>
        <SquareTool aria-label="add chart"><AddChartIcon /></SquareTool>
        <SquareTool aria-label="save"><SaveIcon /></SquareTool>
        <SquareTool aria-label="settings"><GearIcon /></SquareTool>
        <DayCheck><input type="checkbox" /><span>당일</span></DayCheck>
      </ToolRow>
      <OrderRow>
        <PriceInput aria-label="price" defaultValue="8,950" />
        <FlatButton $w={40} $bg="#f4d0c8">매수</FlatButton>
        <FlatButton $w={40} $bg="#c8dcf4">매도</FlatButton>
      </OrderRow>
      <ChartArea>
        <PriceChart />
        <VolumeChart />
        <TimeStrip>
          <svg height="17">
            <g fill={LINE}>
              {[...hours, 265].map(x => <rect key={x} x={x} y="0" width="1" height="17" />)}
            </g>
            {['14', '15', '11', '12', '13', '14', '15'].map((s, i) => <T key={i} x={hours[i] + 2} y={12} c="#444">{s}</T>)}
            <text x="267" y="12" fontSize="12" fontWeight="700" fill="#333">05/</text>
          </svg>
          <TimeTip>2017/05/02(화) 09:40:00</TimeTip>
        </TimeStrip>
      </ChartArea>
      <MiniWindow />
    </Desktop>
  </>
);

export default App;
